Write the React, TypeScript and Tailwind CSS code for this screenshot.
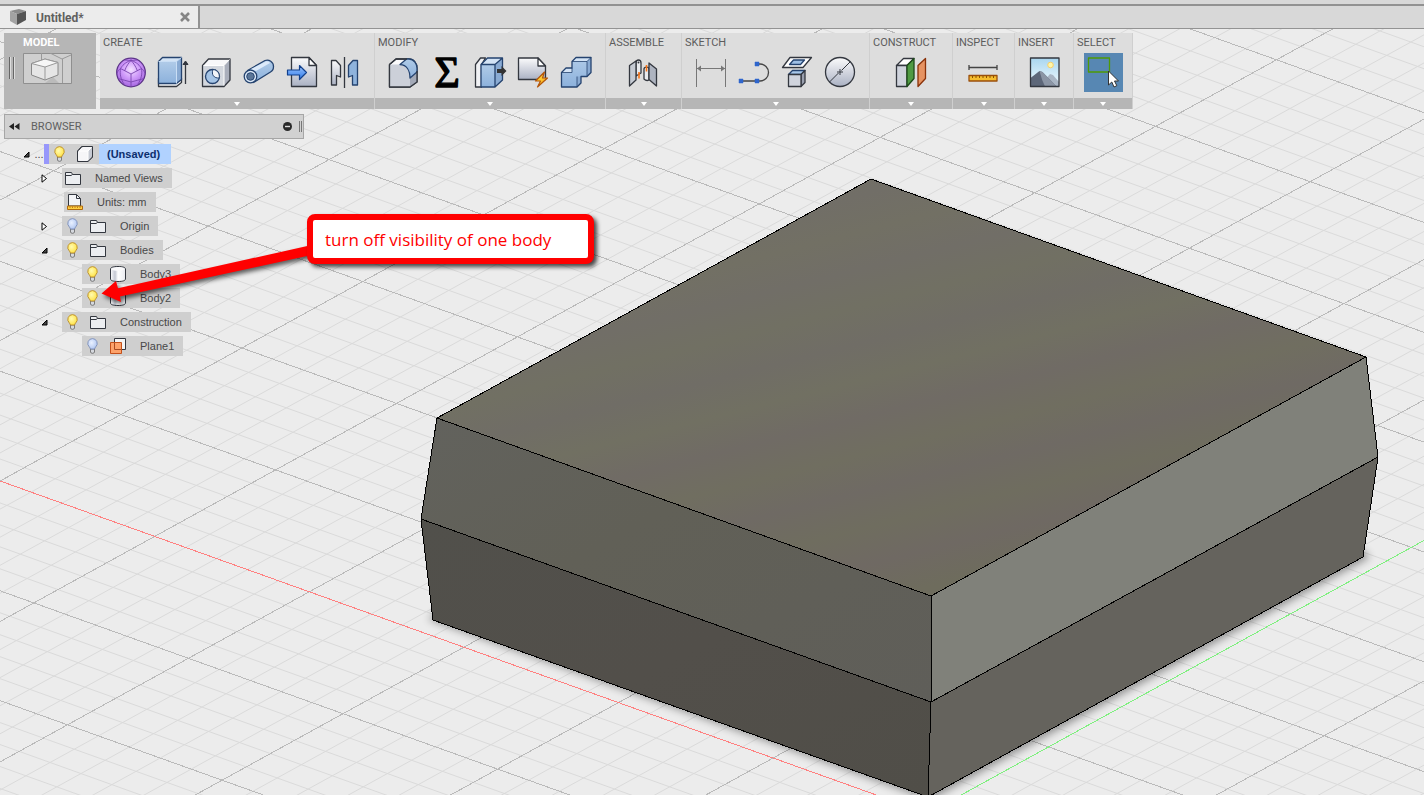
import React, { useState } from 'react'

type IconProps = { children: React.ReactNode }

const INK = '#33373f'
const NAVY = '#25436f'

// ground grid: origin plus one major step along each axis
const ORIGIN = [927.7, 813.4]
const STEP_X = [154.6, 55.4]
const STEP_Y = [120.9, -66.5]

const gridPoint = (i: number, j: number) =>
  `${ORIGIN[0] + i * STEP_X[0] + j * STEP_Y[0]} ${ORIGIN[1] + i * STEP_X[1] + j * STEP_Y[1]}`

const gridPath = (major: boolean) => {
  let d = ''
  for (let n = -90; n <= 90; n++) {
    if ((n % 5 === 0) !== major || n === 0) continue
    d += `M${gridPoint(n / 5, -18)}L${gridPoint(n / 5, 18)}`
    d += `M${gridPoint(-18, n / 5)}L${gridPoint(18, n / 5)}`
  }
  return d
}

const MINOR = gridPath(false)
const MAJOR = gridPath(true)

// soft olive / grey banding of the top face
const BANDS = ['#727065', '#716e67', '#727064', '#716e67', '#717063', '#706d66', '#717062', '#706b65', '#706e60', '#6f6a64', '#6f6d5f', '#6f6963', '#6e6c5d']

const Gradients = () => (
  <svg className="absolute h-0 w-0" aria-hidden="true">
    <defs>
      <linearGradient id="steel" x1="0" y1="0" x2="0" y2="1">
        <stop offset="0" stopColor="#fbfbfc" />
        <stop offset="1" stopColor="#aab1c3" />
      </linearGradient>
      <linearGradient id="blue" x1="0" y1="0" x2="0" y2="1">
        <stop offset="0" stopColor="#b0cbe8" />
        <stop offset="1" stopColor="#8cb1dc" />
      </linearGradient>
      <linearGradient id="arrow" x1="0" y1="0" x2="0" y2="1">
        <stop offset="0" stopColor="#9cc4ff" />
        <stop offset="1" stopColor="#2f7bea" />
      </linearGradient>
      <linearGradient id="bolt" x1="0" y1="0" x2="1" y2="1">
        <stop offset="0" stopColor="#fff04a" />
        <stop offset="1" stopColor="#f79a12" />
      </linearGradient>
      <linearGradient id="sky" x1="0" y1="0" x2="0" y2="1">
        <stop offset="0" stopColor="#a9d6ef" />
        <stop offset="1" stopColor="#f2fbff" />
      </linearGradient>
      <linearGradient id="cyl" x1="0" y1="0" x2="1" y2="0">
        <stop offset="0" stopColor="#ffffff" />
        <stop offset="0.3" stopColor="#c3c7d2" />
        <stop offset="0.5" stopColor="#ffffff" />
        <stop offset="1" stopColor="#e8eaef" />
      </linearGradient>
      <radialGradient id="orb" cx="0.5" cy="0.4" r="0.6">
        <stop offset="0" stopColor="#f3e0ff" />
        <stop offset="0.5" stopColor="#d09bfa" />
        <stop offset="1" stopColor="#a566e0" />
      </radialGradient>
      <radialGradient id="lampOn" cx="0.4" cy="0.4" r="0.6">
        <stop offset="0" stopColor="#fffbb0" />
        <stop offset="1" stopColor="#ffe34a" />
      </radialGradient>
      <radialGradient id="lampOff" cx="0.4" cy="0.4" r="0.6">
        <stop offset="0" stopColor="#eaf1ff" />
        <stop offset="1" stopColor="#b4c9f2" />
      </radialGradient>
    </defs>
  </svg>
)

const Viewport = () => (
  <svg
    className="absolute inset-0 h-full w-full"
    viewBox="0 0 1424 795"
    preserveAspectRatio="xMinYMin slice"
    aria-hidden="true"
  >
    <defs>
      <linearGradient id="topFace" gradientUnits="userSpaceOnUse" x1="650" y1="210" x2="755" y2="630">
        {BANDS.map((color, i) => (
          <stop key={i} offset={i / (BANDS.length - 1)} stopColor={color} />
        ))}
      </linearGradient>
      <linearGradient id="leftTop" x1="0" y1="0" x2="1" y2="1">
        <stop offset="0" stopColor="#62625d" />
        <stop offset="0.4" stopColor="#616057" />
        <stop offset="1" stopColor="#5f5e59" />
      </linearGradient>
      <linearGradient id="leftLow" x1="0" y1="0" x2="1" y2="1">
        <stop offset="0" stopColor="#51504b" />
        <stop offset="0.5" stopColor="#524f4a" />
        <stop offset="1" stopColor="#504e48" />
      </linearGradient>
      <filter id="ground" x="-5%" y="-5%" width="110%" height="110%">
        <feGaussianBlur stdDeviation="4" />
      </filter>
    </defs>
    <path d={MINOR} stroke="#dadada" fill="none" />
    <path d={MAJOR} stroke="#bababa" fill="none" shapeRendering="crispEdges" />
    <path d={`M${gridPoint(-18, 0)}L${gridPoint(18, 0)}`} stroke="#ff8080" shapeRendering="crispEdges" />
    <path d={`M${gridPoint(0, -18)}L${gridPoint(0, 18)}`} stroke="#80f080" shapeRendering="crispEdges" />
    <polygon points="428,619 930,800 1370,557 1300,500 600,500" fill="#000" opacity="0.4" filter="url(#ground)" />
    <g stroke="#000" strokeWidth="1" strokeLinejoin="round" shapeRendering="crispEdges">
      <polygon points="871,179 1366,357 931,596 437,418" fill="url(#topFace)" />
      <polygon points="437,418 931,596 931,702 421,519" fill="url(#leftTop)" />
      <polygon points="421,519 931,702 928,797 433,620" fill="url(#leftLow)" />
      <polygon points="1366,357 1378,457 931,702 931,596" fill="#80817a" />
      <polygon points="1378,457 1363,557 928,797 931,702" fill="#65635d" />
    </g>
  </svg>
)

const ToolIcon = ({ children }: IconProps) => (
  <svg className="h-[43px] w-[43px] overflow-visible" viewBox="0 0 43 43" fill="none" strokeWidth="1.3" strokeLinejoin="round" aria-hidden="true">
    {children}
  </svg>
)

const Sphere = () => (
  <ToolIcon>
    <circle cx="23" cy="21.5" r="14.3" fill="url(#orb)" stroke="#5c3488" />
    <path d="M23 23V35.500M23 23L12.500 17.500M23 23l10.500-5.500M12.500 17.500c3-5 7-7 10.500-8 3.500 1 7.500 3 10.500 8M12.500 17.500c-1 6 .5 11 3.500 15.500M33.500 17.500c1 6-.5 11-3.500 15.500M9 22c1-2 2-3.500 3.500-4.500M37 22c-1-2-2-3.500-3.500-4.500M10 27.500c4 1 9 2.500 13 3.500 4-1 9-2.500 13-3.500M17 9l6 .5 6-.5M23 7v2.500M16.500 20c2-5 4-8 6.500-10.500M29.500 20c-2-5-4-8-6.500-10.500" stroke="#7a45b0" strokeWidth="0.900" />
  </ToolIcon>
)

const Extrude = () => (
  <ToolIcon>
    <path d="M7.500 31.500v4h18l5-4v-4h-23z" fill="#f4f4f6" stroke={INK} />
    <path d="M7.500 10.500l4-4h19l-5 4z" fill="#d3e3f5" />
    <path d="M25.500 10.500l5-4v22l-5 4z" fill="#8aabd3" />
    <path d="M7.500 10.500h18v22h-18z" fill="url(#blue)" />
    <path d="M7.500 32.500v-22l4-4h19v22l-5 4z" stroke={NAVY} />
    <path d="M7.500 10.500h18l5-4M25.500 10.500v22" stroke="#c9def5" strokeWidth="1" />
    <path d="M34.500 11v22" stroke={INK} />
    <path d="M32 13.500l2.500-3.500 2.500 3.500z" fill={INK} stroke={INK} strokeWidth="1" />
  </ToolIcon>
)

const Hole = () => (
  <ToolIcon>
    <path d="M8.500 14.500l6-6.500h21.500l-6 6.500z" fill="#f8f8fa" />
    <path d="M30 14.500L36 8v21l-6 6.500z" fill="#a9aebb" />
    <path d="M8.500 14.500H30v21H8.500z" fill="#d3d7de" />
    <path d="M8.500 35.500v-21l6-6.500h21.500v21l-6 6.500z" stroke={INK} />
    <path d="M9.500 14.500H30l5.500-6M30 14.500v20" stroke="#fff" strokeWidth="1" />
    <circle cx="18.500" cy="25.500" r="7" fill="#a5c4e6" stroke={NAVY} />
    <path d="M19 18.500c-2 5 1 9 6.300 8.500.5-5-2-8-6.300-8.500z" fill="#f3f5f9" stroke={NAVY} strokeWidth="1" />
  </ToolIcon>
)

const Pipe = () => (
  <ToolIcon>
    <path d="M10.500 19.500L28 9.500c4-1.500 8.500 1.500 8.500 6 0 2.500-1 4.500-3 5.500L16.500 31.500z" fill="url(#blue)" stroke={NAVY} />
    <path d="M14 18L29 10.500c2-.5 3 .5 4 1.500L19 20z" fill="#dceafa" />
    <circle cx="13.500" cy="25.500" r="6.300" fill="#dbe8f7" stroke={NAVY} />
    <circle cx="13.500" cy="25.500" r="3.800" fill="#5b7698" stroke={NAVY} strokeWidth="1" />
  </ToolIcon>
)

const Import = () => (
  <ToolIcon>
    <path d="M11.500 6.500h17.500l7.500 8v21h-25z" fill="url(#steel)" stroke={INK} />
    <path d="M29 6.500v8h7.500z" fill="#fff" stroke={INK} />
    <path d="M7.500 19h12v-4.500l7 7-7 7V24h-12z" fill="url(#arrow)" stroke="#12408c" strokeWidth="1.200" />
  </ToolIcon>
)

const Mirror = () => (
  <ToolIcon>
    <path d="M8.500 9.500H13l4.500 5v11.500l-4-1.500V34h-5z" fill="url(#steel)" stroke={INK} />
    <path d="M34.500 9.500H30l-4.500 5v11.500l4-1.500V34h5z" fill="#8fb3dc" stroke={NAVY} />
    <path d="M21.500 6v31" stroke={INK} />
  </ToolIcon>
)

const Fillet = () => (
  <ToolIcon>
    <path d="M6.500 13.500L13 8h13c5 0 8 5 8 9v14l-7 5H6.500z" fill="#fafafb" stroke={INK} />
    <path d="M6.500 13.500h10c6 0 10 5 10.500 12v10.500H6.500z" fill="#ccd0d9" />
    <path d="M27 27l7-6v10l-7 5z" fill="#a3a9b7" />
    <path d="M17 13.500L23.500 8H26c5 0 8 5 8 9v4l-7 6c0-7-3-13-10-13.500z" fill="url(#blue)" stroke={NAVY} />
    <path d="M6.500 13.500L13 8h11M6.500 13.500V36H27l7-5V20" stroke={INK} />
  </ToolIcon>
)

const Sigma = () => (
  <ToolIcon>
    <text x="21" y="36" textAnchor="middle" fontSize="44" fontFamily="'Liberation Serif', serif" fill="#000" stroke="#000">
      Σ
    </text>
  </ToolIcon>
)

const PressPull = () => (
  <ToolIcon>
    <path d="M6.500 13.500l5-6.500h5l-4 6.500V36h-6z" fill="#f0f1f4" stroke={INK} />
    <path d="M12 13.500L18.500 7h15L26 13.500z" fill="#d3e3f5" />
    <path d="M26 13.500L33.500 7v22L26 36z" fill="#8aabd3" />
    <path d="M12 13.500h14V36H12z" fill="url(#blue)" />
    <path d="M12 36V13.500L18.500 7h15v22L26 36zM12 13.500h14L33.500 7M26 13.500V36" stroke={NAVY} />
    <path d="M28 18h4.500v-3l5 5-5 5v-3H28z" fill="#333" />
  </ToolIcon>
)

const QuickDoc = () => (
  <ToolIcon>
    <path d="M6.500 7h19.500l7.500 8v13.500h-27z" fill="url(#steel)" stroke={INK} />
    <path d="M26 7v8h7.500z" fill="#fff" stroke={INK} />
    <path d="M32.500 21l-9 9h5L25.500 36l10-9h-5z" fill="url(#bolt)" stroke="#b4560a" strokeWidth="1.200" />
  </ToolIcon>
)

const Combine = () => (
  <ToolIcon>
    <path d="M6.500 21.500l4.500-4.500h6v-6.500L21 6.500h15v15L32 25.500h-6V32l-4 4H6.500z" fill="url(#blue)" />
    <path d="M17 10.500L21 6.500h15l-4 4zM6.500 21.500L11 17h6v4.500z" fill="#d3e3f5" />
    <path d="M32 10.500l4-4v15l-4 4zM22 25.500h4V32l-4 4z" fill="#8aabd3" />
    <path d="M6.500 21.500l4.500-4.500h6v-6.500L21 6.500h15v15L32 25.500h-6V32l-4 4H6.500z" stroke={NAVY} />
    <path d="M17 10.500h15l4-4M32 10.500v15M6.500 21.500H17M22 25.500V36M17 17v4.500" stroke={NAVY} strokeWidth="0.800" />
  </ToolIcon>
)

const Joint = () => (
  <ToolIcon>
    <path d="M14 12c0-4 5-4 5 0v10l-5 3z" fill="#e8eaee" stroke={INK} />
    <path d="M7.500 14.500L14 10v19l-6.500 6z" fill="#c5cad3" stroke={INK} />
    <path d="M22 18c0-2.500 5-2.500 5 0v11c-2 1-4 0-5-1z" fill="#e8eaee" stroke={INK} />
    <path d="M27 12l7.500 6v17L27 28.500z" fill="#aeb4c0" stroke={INK} />
    <path d="M17 21v6.500M24.500 14v6.500" stroke="#f97316" strokeWidth="1.600" />
    <circle cx="16.500" cy="11.500" r="1" fill={INK} />
  </ToolIcon>
)

const Dimension = () => (
  <ToolIcon>
    <path d="M6.500 8v28M35.500 8v28M7 17.500h28" stroke="#777" strokeWidth="1" />
    <path d="M7 17.500l4-3v6zM35 17.500l-4-3v6z" fill="#777" />
  </ToolIcon>
)

const SketchLine = () => (
  <ToolIcon>
    <path d="M8 30h19a8.500 8.500 0 0 0 0-17h-3" stroke="#444" />
    <path d="M6 28h4v4H6zM22 28h4v4h-4zM22 11h4v4h-4z" fill="#2f66cc" stroke="#2f66cc" strokeWidth="0.500" />
  </ToolIcon>
)

const Project = () => (
  <ToolIcon>
    <path d="M6.500 16.500l7.500-10h21.500l-8.500 10z" fill="#fff" stroke={INK} />
    <path d="M13.500 13.500l4-4.500h11l-4 4.500z" fill="#9fc0e6" stroke={NAVY} />
    <path d="M12.500 23.500l4-4h12.500l-4 4z" fill="#a9c8ea" stroke={NAVY} />
    <path d="M25 23.500l4-4v12l-4 4z" fill="#999fae" stroke={INK} />
    <path d="M12.500 23.500H25v12H12.500z" fill="#d0d4dd" stroke={INK} />
  </ToolIcon>
)

const CircleTool = () => (
  <ToolIcon>
    <circle cx="21" cy="21" r="14.500" fill="url(#steel)" stroke={INK} />
    <path d="M10.500 31l9-9M22.500 19.500L31.500 10.500" stroke={INK} strokeWidth="1" />
    <path d="M18 21h6M21 18v6" stroke={INK} strokeWidth="1" />
  </ToolIcon>
)

const Plane = () => (
  <ToolIcon>
    <path d="M6.500 14.500l7-7H24l-7 7z" fill="#fff" stroke={INK} />
    <path d="M6.500 14.500H17V35.500H6.500z" fill="#cfd3dc" stroke={INK} />
    <path d="M17 14.500l7-7v20l-7 8z" fill="#4f9a43" stroke="#1d4a1a" />
    <path d="M28 14.500l7.500-7v20l-7.500 8z" fill="#e69362" stroke="#8a3209" />
  </ToolIcon>
)

const Measure = () => (
  <ToolIcon>
    <path d="M7 16.500h28M7 14v5M35 14v5" stroke="#444" />
    <path d="M7 24.500h28v5.500H7z" fill="#f5bd2f" stroke="#9a4f0c" />
    <path d="M10.500 25v2M14 25v2M17.500 25v2M21 25v2M24.500 25v2M28 25v2M31.500 25v2" stroke="#8a5200" strokeWidth="1" />
  </ToolIcon>
)

const Picture = () => (
  <ToolIcon>
    <path d="M7.500 7h28.500v28.500H7.500z" fill="url(#sky)" />
    <circle cx="27.500" cy="14" r="2.800" fill="#fff6a8" stroke="#f7cf6a" strokeWidth="1" />
    <path d="M20 31l7-8 3 1 6 7v4H20z" fill="#a9b5c4" />
    <path d="M7.500 27l9-7 3 1 14 14.500h-26z" fill="#5d6779" />
    <path d="M16.500 20l3 1 14 14.500H22l-3-7z" fill="#8b95a5" />
    <path d="M7.500 7h28.500v28.500H7.500z" stroke={INK} />
  </ToolIcon>
)

const SelectTool = () => (
  <ToolIcon>
    <path d="M2 2h39v39H2z" fill="#5787b3" />
    <path d="M6.500 7h21v14h-21z" stroke="#4f9a06" />
    <path d="M26.500 20v14l3.300-3 2.200 5 2.800-1.300-2.300-4.700h4z" fill="#fff" stroke="#333" strokeWidth="1" />
  </ToolIcon>
)

type Group = { name: string; width: string; tools: [string, () => React.JSX.Element][] }

const groups: Group[] = [
  { name: 'CREATE', width: 'w-[275px]', tools: [['Form', Sphere], ['Extrude', Extrude], ['Hole', Hole], ['Pipe', Pipe], ['Import', Import], ['Mirror', Mirror]] },
  { name: 'MODIFY', width: 'w-[231px]', tools: [['Fillet', Fillet], ['Parameters', Sigma], ['Press Pull', PressPull], ['Quick edit', QuickDoc], ['Combine', Combine]] },
  { name: 'ASSEMBLE', width: 'w-[76px]', tools: [['Joint', Joint]] },
  { name: 'SKETCH', width: 'w-[188px]', tools: [['Dimension', Dimension], ['Line', SketchLine], ['Project', Project], ['Circle', CircleTool]] },
  { name: 'CONSTRUCT', width: 'w-[83px]', tools: [['Offset plane', Plane]] },
  { name: 'INSPECT', width: 'w-[62px]', tools: [['Measure', Measure]] },
  { name: 'INSERT', width: 'w-[59px]', tools: [['Picture', Picture]] },
  { name: 'SELECT', width: 'w-[59px]', tools: [['Select', SelectTool]] },
]

const TabBar = () => (
  <header className="relative flex h-[29px] shrink-0 border-b border-[#939393] bg-[#d8d8d8] pt-1">
    <div className="flex flex-1 border-t-2 border-[#929292]">
      <div className="flex w-[200px] items-center border-r-2 border-[#929292] bg-[#ececec] pr-2 pl-[10px]">
        <svg className="h-4 w-4" viewBox="0 0 16 16" aria-hidden="true">
          <path d="M0 2l9-2 7 2-9 3z" fill="#8c8c8c" />
          <path d="M0 2l7 3v11l-7-4z" fill="#a3a3a3" />
          <path d="M7 5l9-3v9l-9 5z" fill="#555" />
        </svg>
        <span className="flex-1 pt-[2px] pl-[10px] font-['Roboto',sans-serif] text-xs font-bold text-[#606060]">Untitled*</span>
        <button aria-label="Close tab" className="cursor-pointer">
          <svg className="h-[10px] w-[10px]" viewBox="0 0 10 10" aria-hidden="true">
            <path d="M1 1l8 8M9 1L1 9" stroke="#858585" strokeWidth="2.600" />
          </svg>
        </button>
      </div>
    </div>
  </header>
)

const Toolbar = () => (
  <nav className="relative mt-1 ml-1 flex items-stretch font-['Roboto',sans-serif] text-[11px] text-[#5c5c5c]">
    <button className="mr-1 flex w-[92px] cursor-pointer flex-col bg-[#b6b6b6] text-left">
      <span className="h-[18px] pl-[19px] leading-5 font-bold text-white">MODEL</span>
      <span className="flex items-start gap-2 pt-[2px] pl-[5px]">
        <svg className="mt-1 h-[22px] w-[6px]" viewBox="0 0 6 22" aria-hidden="true">
          <path d="M.5 0v22M4.500 0v22" stroke="#666" />
          <path d="M1.500 0v22M5.500 0v22" stroke="#ddd" />
        </svg>
        <svg className="h-[31px] w-[49px]" viewBox="0 0 49 31" fill="none" aria-hidden="true">
          <path d="M.5.5h48v30H.5z" fill="#cfcfcf" stroke="#8f8f8f" />
          <path d="M18.500 0v8M39.500 6v24M27 0l12 6 9-4" stroke="#999" />
          <path d="M30 24l6 6H22z" fill="#bbb" />
          <path d="M8.500 10.500L22 6l13 3.500V22l-13 5-13.500-5z" fill="#e6e6e6" stroke="#888" />
          <path d="M8.500 10.500L22 6l13 3.500L22 14z" fill="#f7f7f7" stroke="#999" />
          <path d="M22 14v13" stroke="#999" />
        </svg>
      </span>
    </button>
    {groups.map(({ name, width, tools }) => (
      <section key={name} className={`flex flex-col border-r border-[#cfcfcf] bg-[#dddddd] ${width}`}>
        <h2 className="h-[18px] pl-[3px] leading-5">{name}</h2>
        <div className="mb-1 flex justify-center">
          {tools.map(([title, Icon]) => (
            <button key={title} aria-label={title} className="cursor-pointer">
              <Icon />
            </button>
          ))}
        </div>
        <button aria-label={`${name} menu`} className="flex h-[11px] cursor-pointer items-center justify-center bg-[#b6b6b6]">
          <svg className="h-1 w-[6px]" viewBox="0 0 6 4" aria-hidden="true">
            <path d="M0 0h6L3 4z" fill="#fff" />
          </svg>
        </button>
      </section>
    ))}
  </nav>
)

const TreeIcon = ({ children }: IconProps) => (
  <svg className="h-4 w-4" viewBox="0 0 16 16" fill="none" stroke={INK} strokeWidth="1" strokeLinejoin="round" aria-hidden="true">
    {children}
  </svg>
)

const Folder = () => (
  <TreeIcon>
    <path d="M.5 2.500h6l1 2h8V14.500H.5z" fill="#eceef1" />
    <path d="M1 5.500h5l1.500-1" />
  </TreeIcon>
)

const Part = () => (
  <TreeIcon>
    <path d="M.5 5l4-4.500h11v10.500l-4.500 4.500H.5z" fill="#f6f6f8" />
    <path d="M11 5l4-4v9.800l-4 4.200z" fill="#c6cad3" stroke="none" />
    <path d="M1 5h10l4-4M11 5v10" stroke="#fff" />
    <path d="M.5 6.500c0-1 .3-1.500 1-2.200l3-3c.5-.5 1-.8 2-.8h7.500c1 0 1.500.5 1.500 1.500v8c0 1-.3 1.400-1 2l-2.500 2.500c-.6.700-1 1-2 1H2c-1 0-1.500-.5-1.500-1.500z" />
  </TreeIcon>
)

const Units = () => (
  <TreeIcon>
    <path d="M1.500.5h8l4 4V12h-12z" fill="#f2f3f6" />
    <path d="M9.500.5v4h4" />
    <path d="M.5 12h15v3.500H.5z" fill="#ffcf40" stroke="#b06a10" />
    <path d="M3 12.500v1.500M5.500 12.500v1.500M8 12.500v1.500M10.500 12.500v1.500M13 12.500v1.500" stroke="#b06a10" strokeWidth="0.800" />
  </TreeIcon>
)

const Body = () => (
  <TreeIcon>
    <path d="M.5 3C.5 1.500 3 .5 8 .5s7.500 1 7.500 2.500v10c0 1.500-2.500 2.500-7.500 2.500S.5 14.500.5 13z" fill="url(#cyl)" />
    <path d="M1.500 3c1 2.500 12 2.500 13 0-1-2.300-12-2.300-13 0z" fill="#fafafb" stroke="none" />
  </TreeIcon>
)

const PlaneItem = () => (
  <TreeIcon>
    <path d="M4.500.5h11v11h-11z" fill="#f5f5f5" />
    <path d="M.5 4.500h11v11H.5z" fill="#fda26a" stroke="#c4501a" />
    <path d="M4.500 5v6.500h6.500" stroke="#a84a20" />
  </TreeIcon>
)

const Bulb = ({ on }: { on: boolean }) => (
  <svg className="h-4 w-[11px]" viewBox="0 0 11 16" fill="none" aria-hidden="true">
    <path d="M3.500 11h4v3c0 1.800-4 1.800-4 0z" fill="#d5d8de" stroke="#666" strokeWidth="0.800" />
    <path
      d="M5.500.6a4.800 4.800 0 0 1 3.300 8.200c-.8.8-.9 1.400-1.200 2.200H3.400c-.3-.8-.4-1.400-1.200-2.200A4.800 4.800 0 0 1 5.500.6z"
      fill={on ? 'url(#lampOn)' : 'url(#lampOff)'}
      stroke={on ? '#b88a2a' : '#7d8db5'}
      strokeWidth="0.900"
    />
  </svg>
)

const Twisty = ({ open }: { open: boolean }) => (
  <svg className="h-[9px] w-[7px]" viewBox="0 0 7 9" aria-hidden="true">
    {open ? <path d="M6 2v5H1z" fill="#444" stroke="#000" /> : <path d="M1 .8v7.400l4.500-3.700z" fill="#fff" stroke="#000" />}
  </svg>
)

type Node = { label: string; pad: string; icon: () => React.JSX.Element; open?: boolean; bulb?: boolean; root?: boolean }

const nodes: Node[] = [
  { label: '(Unsaved)', pad: 'pl-[18px]', icon: Part, open: true, bulb: true, root: true },
  { label: 'Named Views', pad: 'pl-9', icon: Folder, open: false },
  { label: 'Units: mm', pad: 'pl-[38px]', icon: Units },
  { label: 'Origin', pad: 'pl-9', icon: Folder, open: false, bulb: false },
  { label: 'Bodies', pad: 'pl-9', icon: Folder, open: true, bulb: true },
  { label: 'Body3', pad: 'pl-14', icon: Body, bulb: true },
  { label: 'Body2', pad: 'pl-14', icon: Body, bulb: true },
  { label: 'Construction', pad: 'pl-9', icon: Folder, open: true, bulb: true },
  { label: 'Plane1', pad: 'pl-14', icon: PlaneItem, bulb: false },
]

const TreeRow = ({ node }: { node: Node }) => {
  const [on, setOn] = useState(node.bulb)
  const Icon = node.icon

  return (
    <li className={`flex h-5 items-center ${node.pad}`}>
      <span className="flex w-4 justify-center">
        {node.open !== undefined && (
          <button aria-label={`Toggle ${node.label}`} className="cursor-pointer">
            <Twisty open={node.open} />
          </button>
        )}
      </span>
      <span className="w-[10px] text-center">{node.root && '...'}</span>
      {node.root && <span className="h-5 w-[5px] bg-[#9797fb]" />}
      <div className="flex h-5 items-center bg-[#cfcfcf]">
        {node.bulb !== undefined && (
          <button aria-label={`Show ${node.label}`} aria-pressed={on} onClick={() => setOn(!on)} className="flex w-5 cursor-pointer justify-center">
            <Bulb on={!!on} />
          </button>
        )}
        <span className={node.bulb === undefined ? 'flex w-[21px] justify-center' : 'flex w-[30px] justify-center pl-[2px]'}>
          <Icon />
        </span>
        <span
          className={
            node.root
              ? 'h-5 bg-[#b1d2ff] pr-[11px] pl-2 leading-5 font-bold text-[#0c2f6e]'
              : node.bulb === undefined
                ? 'pr-[9px] pl-3 leading-5'
                : 'pr-[9px] pl-2 leading-5'
          }
        >
          {node.label}
        </span>
      </div>
    </li>
  )
}

const Browser = () => (
  <aside className="relative mt-[5px] w-[304px]">
    <div className="ml-1 flex h-[25px] items-center border border-[#a6a6a6] bg-[#d1d1d1] pr-px pl-1">
      <button aria-label="Collapse browser" className="cursor-pointer">
        <svg className="h-[7px] w-[11px]" viewBox="0 0 11 7" aria-hidden="true">
          <path d="M5 0v7L0 3.500zM10.500 0v7l-5-3.500z" fill="#222" />
        </svg>
      </button>
      <h2 className="flex-1 pt-[2px] pl-[11px] font-['Roboto',sans-serif] text-[11px] text-[#606060]">BROWSER</h2>
      <button aria-label="Minimize browser" className="mr-[7px] cursor-pointer">
        <svg className="h-[9px] w-[9px]" viewBox="0 0 9 9" aria-hidden="true">
          <circle cx="4.500" cy="4.500" r="4.500" fill="#2a2a2a" />
          <path d="M2 4.500h5" stroke="#ddd" strokeWidth="1.400" />
        </svg>
      </button>
      <svg className="h-[11px] w-[3px]" viewBox="0 0 3 11" aria-hidden="true">
        <path d="M.5 0v11M2.500 0v11" stroke="#777" />
      </svg>
    </div>
    <ul className="mt-[5px] flex flex-col gap-1 font-['Liberation_Sans',sans-serif] text-[11px] text-[#484848]">
      {nodes.map((node) => (
        <TreeRow key={node.label} node={node} />
      ))}
    </ul>
  </aside>
)

const Callout = () => (
  <>
    <svg className="pointer-events-none absolute top-[240px] left-[96px] h-[70px] w-[220px] drop-shadow-[2px_3px_2px_rgba(0,0,0,0.6)]" viewBox="96 240 220 70" aria-hidden="true">
      <path d="M101.500 293.500L116 281l2 7.300L314 244.500v10L120 296.500l1 5.500z" fill="#f00" />
    </svg>
    <p className="absolute top-[214px] left-[307px] flex h-[50px] w-[287px] items-center rounded-lg border-6 border-[#f00] bg-white pt-[2px] pl-3 font-['Open_Sans',sans-serif] text-[17px] whitespace-nowrap text-[#f00] shadow-[3px_3px_4px_rgba(0,0,0,0.7)]">
      turn off visibility of one body
    </p>
  </>
)

const App = () => (
  <main className="relative flex h-screen flex-col overflow-hidden bg-[#ececec]">
    <Gradients />
    <Viewport />
    <TabBar />
    <Toolbar />
    <Browser />
    <Callout />
  </main>
)

export default App
